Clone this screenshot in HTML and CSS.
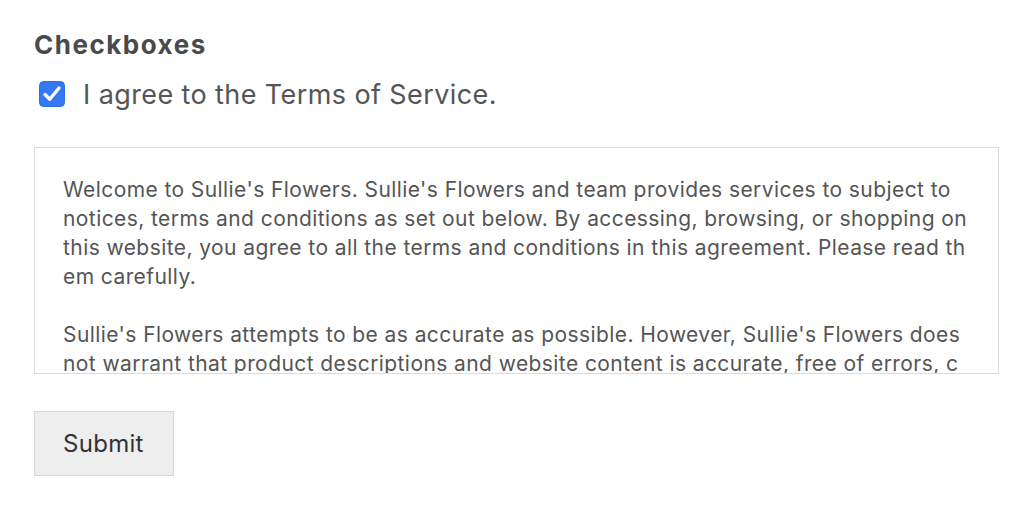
FILE: index.html
```html
<!DOCTYPE html>
<html>
<head>
<meta charset="utf-8">
<link rel="stylesheet" href="styles.css">
</head>
<body>
<main class="page">
  <h2 class="title">Checkboxes</h2>
  <label class="check">
    <span class="box" aria-hidden="true">
      <svg viewBox="0 0 26 26" width="26" height="26">
        <rect x="0.5" y="0.5" width="25" height="25" rx="4" fill="#3478f6" stroke="#2f6fe4"/>
        <path d="M6 13.5 L10.8 18.3 L20 7" fill="none" stroke="#fff" stroke-width="3.4" stroke-linecap="round" stroke-linejoin="round"/>
      </svg>
    </span>
    <span class="check-text">I agree to the Terms of Service.</span>
  </label>
  <div class="terms">
    <p>Welcome to Sullie's Flowers. Sullie's Flowers and team provides services to subject to<br>notices, terms and conditions as set out below. By accessing, browsing, or shopping on this website, you agree to all the terms and conditions in this agreement. Please read them carefully.</p>
    <p>Sullie's Flowers attempts to be as accurate as possible. However, Sullie's Flowers does not warrant that product descriptions and website content is accurate, free of errors, complete, reliable, or current. If a product offered by Sullie's Flowers is not as described, your sole remedy is to return it in unused condition.</p>
  </div>
  <button class="submit" type="button">Submit</button>
</main>
</body>
</html>
```
FILE: styles.css
```css
html, body {
  margin: 0;
  padding: 0;
  background: #ffffff;
}
.page {
  padding: 28px 25px 0 34px;
  font-family: Inter, "Liberation Sans", sans-serif;
  color: #4a4a4a;
}
.title {
  margin: 0;
  font-size: 26px;
  font-weight: 700;
  letter-spacing: 1.5px;
  line-height: 34px;
  color: #4a4a4a;
}
.check {
  display: flex;
  align-items: center;
  gap: 18px;
  margin-top: 13px;
  padding-left: 5px;
}
.box {
  display: flex;
  width: 26px;
  height: 26px;
}
.check-text {
  font-size: 27px;
  letter-spacing: 0.4px;
  line-height: 34px;
  padding-top: 3px;
  color: #555555;
}
.terms {
  margin-top: 35px;
  height: 171px;
  border: 1px solid #dcdcdc;
  padding: 27px 28px 27px 28px;
  overflow: hidden;
  font-size: 21px;
  letter-spacing: 0.42px;
  line-height: 29px;
  color: #555555;
  word-break: break-all;
}
.terms p {
  margin: 0 0 29px 0;
}
.submit {
  display: block;
  margin-top: 37px;
  width: 140px;
  height: 65px;
  padding: 0 0 0 28px;
  text-align: left;
  background: #eeeeee;
  border: 1px solid #d8d8d8;
  border-radius: 0;
  font-family: Inter, "Liberation Sans", sans-serif;
  font-size: 24px;
  letter-spacing: 0.3px;
  color: #333333;
}
```
